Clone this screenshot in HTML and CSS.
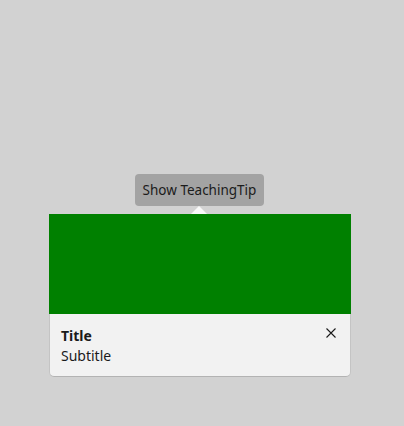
FILE: index.html
```html
<!DOCTYPE html>
<html lang="en">
<head>
    <meta charset="UTF-8">
    <meta name="viewport" content="width=device-width, initial-scale=1.0">
    <title>TeachingTip</title>
    <link rel="stylesheet" href="styles.css">
</head>
<body>
    <div class="stage">
        <button class="show-btn">Show TeachingTip</button>

        <!-- Teaching tip with hero content on top -->
        <div class="tip">
            <div class="tip-tail"></div>
            <div class="tip-hero"></div>
            <div class="tip-body">
                <div class="tip-text">
                    <p class="tip-title">Title</p>
                    <p class="tip-subtitle">Subtitle</p>
                </div>
                <button class="tip-close" aria-label="Close">
                    <svg width="10" height="10" viewBox="0 0 10 10">
                        <path d="M0.5 0.5 L9.5 9.5 M9.5 0.5 L0.5 9.5" stroke="#1a1a1a" stroke-width="1.1" fill="none"/>
                    </svg>
                </button>
            </div>
        </div>
    </div>
</body>
</html>
```

FILE: styles.css
```css
body {
    margin: 0;
    font-family: 'Noto Sans', 'Open Sans', sans-serif;
    background-color: #d2d2d2;
    color: #1a1a1a;
}

.stage {
    height: 426px;
    display: flex;
    flex-direction: column;
    align-items: center;
    padding: 174px 4px 0 0;
    box-sizing: border-box;
}

/* Gray toggle button */
.show-btn {
    height: 32px;
    width: 129px;
    margin-right: 1px;
    padding: 0;
    border: none;
    border-radius: 4px;
    background-color: #a3a3a3;
    color: #1b1b1b;
    font-family: inherit;
    font-size: 13.5px;
    cursor: pointer;
}

/* Teaching tip */
.tip {
    position: relative;
    width: 302px;
    margin-top: 8px;
    background-color: #f2f2f2;
    border: 1px solid #c4c4c4;
    border-top: none;
    border-bottom-color: #b3b3b3;
    border-radius: 0 0 5px 5px;
    box-sizing: border-box;
}

.tip-tail {
    position: absolute;
    top: -8px;
    left: 50%;
    margin-left: -9px;
    width: 0;
    height: 0;
    border-left: 8px solid transparent;
    border-right: 8px solid transparent;
    border-bottom: 8px solid #f9f9f9;
}

.tip-hero {
    height: 100px;
    margin: 0 -1px;
    background-color: #008000;
}

.tip-body {
    position: relative;
    padding: 12px 11px 10px;
}

.tip-text p {
    margin: 0;
    font-size: 14px;
    line-height: 20px;
}

.tip-title {
    font-weight: bold;
}

.tip-close {
    position: absolute;
    top: 14px;
    right: 14px;
    width: 10px;
    height: 10px;
    padding: 0;
    border: none;
    background: none;
    display: flex;
}
```
